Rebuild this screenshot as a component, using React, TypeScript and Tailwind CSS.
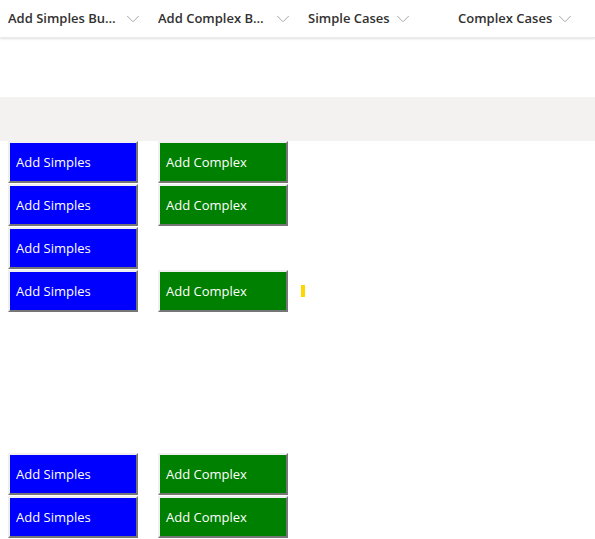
import { ChevronDown } from 'lucide-react';

const columns = ['Add Simples Button', 'Add Complex Button', 'Simple Cases', 'Complex Cases'];

type Row = { simple: boolean; complex: boolean; flag?: boolean };

const topRows: Row[] = [
	{ simple: true, complex: true },
	{ simple: true, complex: true },
	{ simple: true, complex: false },
	{ simple: true, complex: true, flag: true },
];

const bottomRows: Row[] = [
	{ simple: true, complex: true },
	{ simple: true, complex: true },
];

function OldButton({ label, color }: { label: string; color: 'blue' | 'green' }) {
	return (
		<button
			type="button"
			className={`h-[42px] w-[130px] border-2 border-t-[#f0f0f0] border-l-[#f0f0f0] border-b-[#767676] border-r-[#767676] pl-[6px] pt-[1px] text-left text-[13px] text-white ${
				color === 'blue' ? 'bg-[#0000ff]' : 'bg-[#008000]'
			}`}
		>
			{label}
		</button>
	);
}

function ListRow({ row }: { row: Row }) {
	return (
		<div className="flex h-[43px] items-start">
			<div className="w-[150px] pl-2">{row.simple && <OldButton label="Add Simples" color="blue" />}</div>
			<div className="w-[150px] pl-2">{row.complex && <OldButton label="Add Complex" color="green" />}</div>
			<div className="w-[150px]">
				{row.flag && <div className="ml-[1px] mt-[15px] h-[12px] w-[4px] bg-[#ffd700]" />}
			</div>
		</div>
	);
}

export default function App() {
	return (
		<div className="h-[539px] w-[595px] overflow-hidden bg-white font-['Segoe_UI','Open_Sans','Noto_Sans',sans-serif] text-[#323130]">
			<header className="flex h-[38px] items-center border-b border-[#edebe9] shadow-[0_1px_2px_rgba(0,0,0,0.12)]">
				{columns.map((c) => (
					<div key={c} className="flex w-[150px] shrink-0 items-center gap-[2px] pl-2">
						<span className="max-w-[112px] truncate text-[13px] font-semibold">{c}</span>
						<ChevronDown className="h-[22px] w-[22px] text-[#a19f9d]" strokeWidth={1} aria-hidden="true" />
					</div>
				))}
			</header>
			<div className="h-[59px]" />
			<div className="h-[44px] bg-[#f3f2f1]" />
			<div className="flex flex-col">
				{topRows.map((r, i) => (
					<ListRow key={i} row={r} />
				))}
			</div>
			<div className="h-[140px]" />
			<div className="flex flex-col">
				{bottomRows.map((r, i) => (
					<ListRow key={i} row={r} />
				))}
			</div>
		</div>
	);
}
